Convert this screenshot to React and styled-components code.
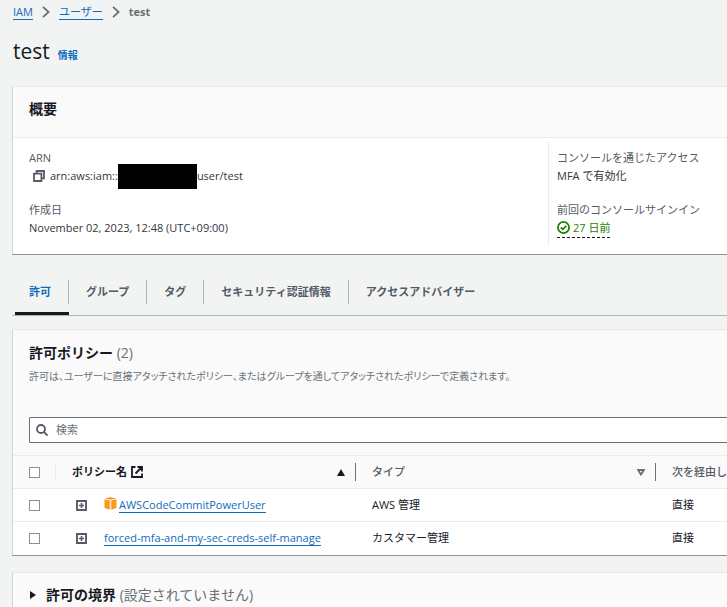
import React, { useState } from 'react';
import styled, { createGlobalStyle } from 'styled-components';

const policies = [
  { name: 'AWSCodeCommitPowerUser', type: 'AWS 管理', via: '直接', managed: true },
  { name: 'forced-mfa-and-my-sec-creds-self-manage', type: 'カスタマー管理', via: '直接', managed: false },
];

const tabs = ['許可', 'グループ', 'タグ', 'セキュリティ認証情報', 'アクセスアドバイザー'];

const App = () => {
  const [active, setActive] = useState('許可');

  return (
    <Page>
      <GlobalStyle />
      <Main>
        <Breadcrumbs aria-label="breadcrumb">
          <Link href="#iam">IAM</Link>
          <Chevron />
          <Link href="#users">ユーザー</Link>
          <Chevron />
          <Current>test</Current>
        </Breadcrumbs>

        <TitleRow>
          <Title>test</Title>
          <InfoLink href="#info">情報</InfoLink>
        </TitleRow>

        <Card>
          <SummaryHeader>
            <Heading>概要</Heading>
          </SummaryHeader>
          <SummaryGrid>
            <SummaryColumn>
              <Term>ARN</Term>
              <Value>
                <IconButton type="button" aria-label="copy"><CopyIcon /></IconButton>
                arn:aws:iam::<Redacted />user/test
              </Value>
              <Term>作成日</Term>
              <Value>November 02, 2023, 12:48 (UTC+09:00)</Value>
            </SummaryColumn>
            <SummaryColumn $divided>
              <Term>コンソールを通じたアクセス</Term>
              <Value>MFA で有効化</Value>
              <Term>前回のコンソールサインイン</Term>
              <Value><Status><CheckIcon />27 日前</Status></Value>
            </SummaryColumn>
          </SummaryGrid>
        </Card>

        <Tabs role="tablist">
          {tabs.map((tab) => (
            <Tab key={tab} type="button" role="tab" aria-selected={tab === active} $active={tab === active} onClick={() => setActive(tab)}>
              <TabLabel>{tab}</TabLabel>
            </Tab>
          ))}
        </Tabs>

        <Card>
          <PolicyHeader>
            <Heading>許可ポリシー <Counter>(2)</Counter></Heading>
            <Description>許可は、ユーザーに直接アタッチされたポリシー、またはグループを通してアタッチされたポリシーで定義されます。</Description>
            <SearchBox>
              <SearchIcon />
              <SearchInput type="text" placeholder="検索" aria-label="検索" />
            </SearchBox>
          </PolicyHeader>
          <Table>
            <colgroup>
              <col width="43" />
              <col width="300" />
              <col width="300" />
              <col />
            </colgroup>
            <thead>
              <tr>
                <Th $line="#eaeded"><Checkbox type="checkbox" aria-label="すべて選択" /></Th>
                <Th $line="#687078">
                  <HeadCell $sorted>ポリシー名<ExternalIcon /><SortIcon filled /></HeadCell>
                </Th>
                <Th $line="#687078">
                  <HeadCell>タイプ<SortIcon /></HeadCell>
                </Th>
                <Th>
                  <HeadCell>次を経由してアタッチ</HeadCell>
                </Th>
              </tr>
            </thead>
            <tbody>
              {policies.map((policy) => (
                <tr key={policy.name}>
                  <Td><Checkbox type="checkbox" aria-label={policy.name} /></Td>
                  <Td>
                    <NameCell>
                      <ExpandButton type="button" aria-label="expand"><PlusIcon /></ExpandButton>
                      {policy.managed && <BoxIcon />}
                      <Link href="#policy">{policy.name}</Link>
                    </NameCell>
                  </Td>
                  <Td>{policy.type}</Td>
                  <Td>{policy.via}</Td>
                </tr>
              ))}
            </tbody>
          </Table>
        </Card>

        <Card>
          <BoundaryToggle type="button" aria-expanded="false">
            <svg width="8" height="10" viewBox="0 0 8 10" aria-hidden="true"><path d="M1 1l6 4-6 4z" fill="#16191f" /></svg>
            <Heading as="span">許可の境界 <Counter>(設定されていません)</Counter></Heading>
          </BoundaryToggle>
        </Card>
      </Main>
    </Page>
  );
};

const Chevron = () => (
  <svg width="8" height="12" viewBox="0 0 8 12" fill="none" stroke="#687078" strokeWidth="1.8" aria-hidden="true">
    <path d="M1 .8L6.6 6 1 11.2" />
  </svg>
);

const CopyIcon = () => (
  <svg width="12" height="12" viewBox="0 0 12 12" fill="none" stroke="#545b64" strokeWidth="1.8" aria-hidden="true">
    <path d="M1 3.6h7.4V11H1zM3.6 3.6V1H11v7.4H8.4" />
  </svg>
);

const CheckIcon = () => (
  <svg width="13" height="13" viewBox="0 0 13 13" fill="none" stroke="#1d8102" strokeWidth="1.7" aria-hidden="true">
    <circle cx="6.5" cy="6.5" r="5.6" />
    <path d="M3.8 6.4l2 2 3.6-3.6" />
  </svg>
);

const SearchIcon = () => (
  <svg width="12" height="12" viewBox="0 0 12 12" fill="none" stroke="#545b64" strokeWidth="1.8" aria-hidden="true">
    <circle cx="5" cy="5" r="4" />
    <path d="M8 8l3.6 3.6" />
  </svg>
);

const ExternalIcon = () => (
  <svg width="12" height="12" viewBox="0 0 12 12" fill="none" stroke="#16191f" strokeWidth="1.8" aria-hidden="true">
    <path d="M4.5 1H1v10h10V7.5M6.5 1H11v4.5M11 1L4.5 7.5" />
  </svg>
);

const PlusIcon = () => (
  <svg width="11" height="11" viewBox="0 0 11 11" fill="none" stroke="#545b64" aria-hidden="true">
    <path d="M1 1h9v9H1z" strokeWidth="1.9" />
    <path d="M5.5 3v5M3 5.5h5" strokeWidth="1.6" />
  </svg>
);

const BoxIcon = () => (
  <BoxSvg width="13" height="13" viewBox="0 0 13 13" aria-hidden="true">
    <path d="M1 1.5L6.5 0 12 1.5 6.5 2.8z" fill="#f8991d" />
    <path d="M0.5 2.3l5.3 1.3v9.2L0.5 11zM12.5 2.3L7.2 3.6v9.2l5.3-1.8z" fill="#f8991d" />
    <path d="M5.8 3.6l.7-.2.7.2v9.2h-1.4z" fill="#fde0b8" />
  </BoxSvg>
);

const SortIcon = ({ filled }) => (
  <SortSvg width="8" height="7" viewBox="0 0 8 7" aria-hidden="true">
    {filled
      ? <path d="M4 0l4 7H0z" fill="#16191f" />
      : <path d="M1 1h6L4 5.6z" fill="none" stroke="#687078" strokeWidth="1.8" />}
  </SortSvg>
);

const GlobalStyle = createGlobalStyle`
  * {
    box-sizing: border-box;
  }
  body {
    margin: 0;
    background: #f2f4f4;
    color: #16191f;
    font-family: "Open Sans", "Noto Sans CJK JP", sans-serif;
    font-size: 11px;
    line-height: 18px;
  }
  button, input {
    font: inherit;
    color: inherit;
  }
`;

const Page = styled.div`
  min-height: 100vh;
  overflow: hidden;
`;

/* wider than small windows, the console cuts off on the right */
const Main = styled.main`
  min-width: 960px;
  padding: 3px 12px 0;
`;

const Breadcrumbs = styled.nav`
  display: flex;
  align-items: center;
  gap: 9px;
  height: 18px;
  padding-left: 1px;
`;

const Link = styled.a`
  color: #0f6cbd;
  line-height: 15px;
  text-decoration: none;
  border-bottom: 1px solid #0f6cbd;
`;

const Current = styled.span`
  color: #687078;
  font-weight: 700;
`;

const TitleRow = styled.div`
  display: flex;
  align-items: baseline;
  gap: 8px;
  padding: 15px 0 20px 1px;
`;

const Title = styled.h1`
  margin: 0;
  font-size: 21px;
  font-weight: 400;
  line-height: 30px;
`;

const InfoLink = styled.a`
  color: #0f6cbd;
  font-size: 10px;
  font-weight: 700;
  text-decoration: none;
`;

const Card = styled.section`
  margin-bottom: 16px;
  background: #fff;
  border: 1px solid #e3e8e8;
  border-left-color: #d0d6d6;
  border-bottom-color: #879596;
`;

const SummaryHeader = styled.header`
  padding: 11px 16px 17px;
  background: #fafafa;
  border-bottom: 1px solid #eaeded;
`;

const Heading = styled.h2`
  margin: 0;
  font-size: 14px;
  font-weight: 700;
  line-height: 22px;
`;

const Counter = styled.span`
  color: #687078;
  font-weight: 400;
`;

const SummaryGrid = styled.div`
  display: grid;
  grid-template-columns: 519px 1fr;
  padding: 4px 16px 8px;
`;

const SummaryColumn = styled.div`
  display: grid;
  grid-template-rows: 18px 34px 18px 18px;
  padding: 7px 0 9px ${({ $divided }) => ($divided ? '8px' : '0')};
  border-left: ${({ $divided }) => ($divided ? '1px solid #eaeded' : 'none')};
`;

const Term = styled.div`
  color: #545b64;
`;

const Value = styled.div`
  display: flex;
  align-items: center;
  height: 18px;
  color: #31363d;
`;

const IconButton = styled.button`
  display: flex;
  margin: 0 5px 0 4px;
  padding: 0;
  border: 0;
  background: none;
`;

const Redacted = styled.span`
  width: 79px;
  height: 25px;
  background: #000;
`;

const Status = styled.span`
  display: inline-flex;
  align-items: center;
  gap: 3px;
  color: #1d8102;
  border-bottom: 1px dashed #16191f;
`;

const Tabs = styled.div`
  display: flex;
  margin-bottom: 13px;
  padding: 9px 0 0 3px;
  border-bottom: 1px solid #aab7b8;
`;

const TabLabel = styled.span`
  display: block;
  padding: 3px 17px;
  border-right: 1px solid #aab7b8;
`;

const Tab = styled.button`
  padding: 0 0 8px;
  border: 0;
  border-bottom: 3px solid ${({ $active }) => ($active ? '#16191f' : 'transparent')};
  background: none;
  color: ${({ $active }) => ($active ? '#0f6cbd' : '#545b64')};
  font-weight: 700;

  &:first-child ${TabLabel} {
    padding-left: 14px;
  }
  &:last-child ${TabLabel} {
    border-right: 0;
  }
`;

const PolicyHeader = styled.header`
  padding: 12px 16px;
  background: #fafafa;
`;

const Description = styled.p`
  margin: 3px 0 32px;
  color: #687078;
  font-size: 10px;
  line-height: 18px;
  font-feature-settings: "palt";
`;

const SearchBox = styled.div`
  display: flex;
  align-items: center;
  gap: 8px;
  height: 26px;
  padding: 0 6px;
  background: #fff;
  border: 1px solid #687078;
  border-radius: 1px;
`;

const SearchInput = styled.input`
  flex: 1;
  padding: 0;
  border: 0;
  background: none;
  outline: none;

  &::placeholder {
    color: #687078;
  }
`;

const Table = styled.table`
  width: 100%;
  table-layout: fixed;
  border-collapse: collapse;
`;

const Th = styled.th`
  height: 33px;
  padding: 0 0 0 16px;
  border-top: 1px solid #eaeded;
  text-align: left;
  color: #545b64;
  background: linear-gradient(${({ $line }) => $line || 'transparent'}, ${({ $line }) => $line || 'transparent'}) right center / 1px 18px no-repeat #fafafa;
`;

const HeadCell = styled.div`
  display: flex;
  align-items: center;
  gap: 4px;
  padding-right: 11px;
  color: ${({ $sorted }) => ($sorted ? '#16191f' : '#545b64')};
  font-weight: ${({ $sorted }) => ($sorted ? 700 : 500)};
`;

const SortSvg = styled.svg`
  margin-left: auto;
`;

const Td = styled.td`
  height: 33px;
  padding: 0 0 0 16px;
  border-top: 1px solid #eaeded;
`;

const Checkbox = styled.input`
  display: block;
  appearance: none;
  width: 11px;
  height: 11px;
  margin: 0;
  background: #fff;
  border: 1px solid #879196;

  &:checked {
    background: #0f6cbd;
  }
`;

const NameCell = styled.div`
  display: flex;
  align-items: center;
`;

const ExpandButton = styled.button`
  display: flex;
  margin: 0 17px 0 4px;
  padding: 0;
  border: 0;
  background: none;
`;

const BoxSvg = styled.svg`
  margin: 0 2px 4px 0;
`;

const BoundaryToggle = styled.button`
  display: flex;
  align-items: center;
  gap: 9px;
  width: 100%;
  padding: 11px 16px;
  border: 0;
  background: #fafafa;
  text-align: left;
`;

export default App;
